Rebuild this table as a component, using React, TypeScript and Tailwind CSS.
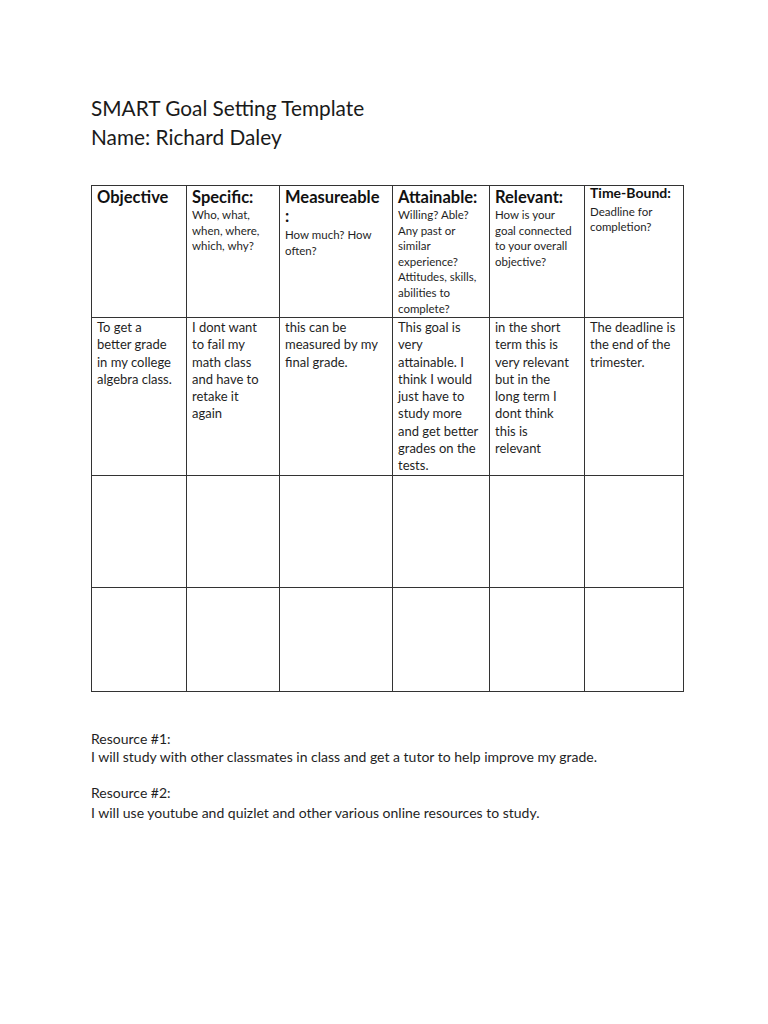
import React from "react";

const font = { fontFamily: "Lato, 'Liberation Sans', sans-serif" };

function Head({ title, sub }: { title: string; sub?: string[] }) {
  return (
    <div>
      <div className="text-[16.5px] leading-[19px] font-bold text-[#111]">{title}</div>
      {sub && (
        <div className="text-[11.5px] leading-[15.6px] text-[#1f1f1f]">
          {sub.map((s, i) => (
            <div key={i}>{s}</div>
          ))}
        </div>
      )}
    </div>
  );
}

function Body({ lines }: { lines: string[] }) {
  return (
    <div className="text-[13px] leading-[17.3px] text-[#1f1f1f]">
      {lines.map((s, i) => (
        <div key={i}>{s}</div>
      ))}
    </div>
  );
}

export default function App() {
  const td = "border border-[#333] align-top px-[5px] py-0";
  const bd = "border border-[#333] align-top px-[5px] pt-[1px] pb-0";
  return (
    <div className="w-[768px] h-[1024px] bg-white pl-[91px] pt-[93px]" style={font}>
      <div className="text-[20.8px] leading-[29px] text-[#1a1a1a]">
        <div>SMART Goal Setting Template</div>
        <div>Name: Richard Daley</div>
      </div>
      <table className="border-collapse table-fixed mt-[34px] w-[593px]">
        <colgroup>
          <col className="w-[95px]" />
          <col className="w-[93px]" />
          <col className="w-[113px]" />
          <col className="w-[97px]" />
          <col className="w-[95px]" />
          <col className="w-[99px]" />
        </colgroup>
        <tbody>
          <tr className="h-[132px]">
            <td className={td + " pt-[2px]"}><Head title="Objective" /></td>
            <td className={td + " pt-[2px]"}><Head title="Specific:" sub={["Who, what,", "when, where,", "which, why?"]} /></td>
            <td className={td + " pt-[2px]"}>
              <div className="text-[16.5px] leading-[19px] font-bold text-[#111]">Measureable</div>
              <div className="text-[16.5px] leading-[19px] font-bold text-[#111]">:</div>
              <div className="text-[11.5px] leading-[15.6px] text-[#1f1f1f] mt-[1px]">
                <div>How much? How</div>
                <div>often?</div>
              </div>
            </td>
            <td className={td + " pt-[2px]"}><Head title="Attainable:" sub={["Willing? Able?", "Any past or", "similar", "experience?", "Attitudes, skills,", "abilities to", "complete?"]} /></td>
            <td className={td + " pt-[2px]"}><Head title="Relevant:" sub={["How is your", "goal connected", "to your overall", "objective?"]} /></td>
            <td className={td + " pt-0"}>
              <div className="text-[14px] leading-[14px] font-bold text-[#111]">Time-Bound:</div>
              <div className="text-[11.5px] leading-[15px] text-[#1f1f1f] mt-[4px]">
                <div>Deadline for</div>
                <div>completion?</div>
              </div>
            </td>
          </tr>
          <tr className="h-[158px]">
            <td className={bd}><Body lines={["To get a", "better grade", "in my college", "algebra class."]} /></td>
            <td className={bd}><Body lines={["I dont want", "to fail my", "math class", "and have to", "retake it", "again"]} /></td>
            <td className={bd}><Body lines={["this can be", "measured by my", "final grade."]} /></td>
            <td className={bd}><Body lines={["This goal is", "very", "attainable. I", "think I would", "just have to", "study more", "and get better", "grades on the", "tests."]} /></td>
            <td className={bd}><Body lines={["in the short", "term this is", "very relevant", "but in the", "long term I", "dont think", "this is", "relevant"]} /></td>
            <td className={bd}><Body lines={["The deadline is", "the end of the", "trimester."]} /></td>
          </tr>
          <tr className="h-[112px]">
            <td className={td}></td>
            <td className={td}></td>
            <td className={td}></td>
            <td className={td}></td>
            <td className={td}></td>
            <td className={td}></td>
          </tr>
          <tr className="h-[104px]">
            <td className={td}></td>
            <td className={td}></td>
            <td className={td}></td>
            <td className={td}></td>
            <td className={td}></td>
            <td className={td}></td>
          </tr>
        </tbody>
      </table>
      <div className="mt-[38px] text-[14px] leading-[18px] text-[#1f1f1f]">
        <div>Resource #1:</div>
        <div>I will study with other classmates in class and get a tutor to help improve my grade.</div>
        <div className="mt-[18px]">Resource #2:</div>
        <div className="mt-[2px]">I will use youtube and quizlet and other various online resources to study.</div>
      </div>
    </div>
  );
}
